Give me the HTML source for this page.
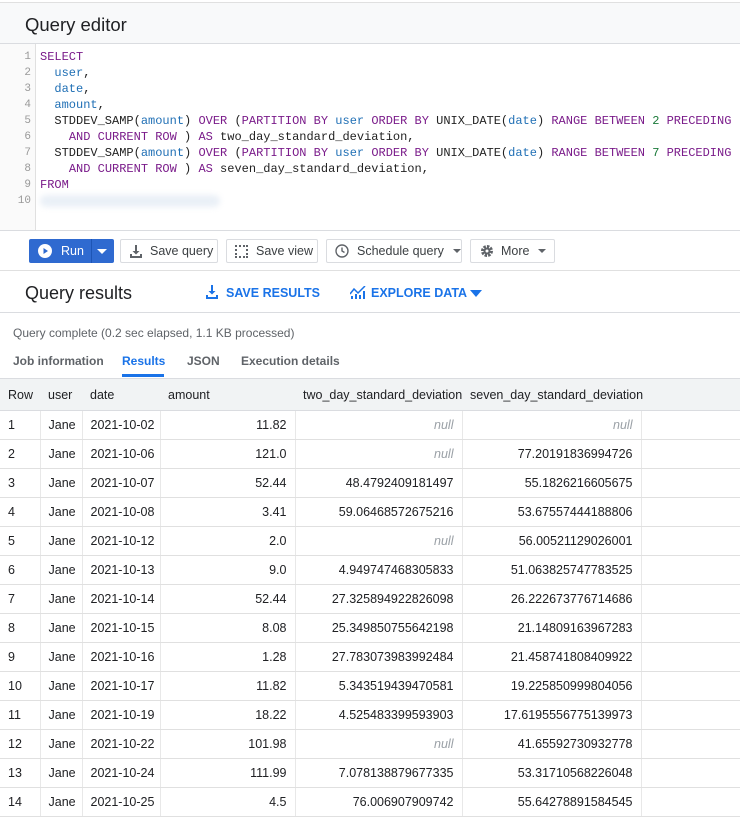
<!DOCTYPE html>
<html><head><meta charset="utf-8"><style>
*{margin:0;padding:0;box-sizing:border-box}
body{width:740px;height:820px;overflow:hidden;background:#fff;font-family:"Liberation Sans",Arial,sans-serif;color:#202124;position:relative}
.hdr{position:absolute;top:2px;left:0;width:740px;height:42px;background:#f8f9fa;border-top:1px solid #e0e0e0;border-bottom:1px solid #dadce0}
.hdr span{position:absolute;left:25px;top:11px;font-size:18.5px;color:#202124}
.gut{position:absolute;top:44px;left:0;width:36px;height:187px;border-right:1px solid #e0e0e0;background:#fafafa}
.ln{position:absolute;left:0;width:31px;text-align:right;font:11px "Liberation Mono",monospace;color:#999;line-height:16px}
.code{position:absolute;left:40px;font:12px "Liberation Mono",monospace;white-space:pre;color:#222}
.k{color:#7a1b8a}.b{color:#1f6fb5}.n{color:#1b7a3a}
.edb{position:absolute;top:230px;left:0;width:740px;border-top:1px solid #dadce0}
.btn{position:absolute;top:239px;height:24px;border:1px solid #dadce0;border-radius:2px;font-size:12.5px;color:#3c4043;display:flex;align-items:center;background:#fff;white-space:nowrap}
.run{position:absolute;top:239px;left:29px;width:85px;height:24px;background:#2f6ad0;border-radius:2px;color:#fff;font-size:12.5px}
.rh{position:absolute;top:270px;left:0;width:740px;height:43px;border-top:1px solid #e0e0e0;border-bottom:1px solid #dadce0}
.blue{color:#1a73e8;font-size:12.5px;font-weight:bold;position:absolute;top:15px}
table{position:absolute;top:380px;left:0;width:740px;table-layout:fixed;border-collapse:collapse;font-size:12.5px;white-space:nowrap}
th{height:29px;background:#f1f3f4;text-align:left;font-weight:normal;padding:0 8px;border-bottom:1px solid #dadce0;color:#202124}
td{height:29px;padding:0 8px;border-bottom:1px solid #e0e0e0;border-right:1px solid #e8e8e8}
td.r{text-align:right}
i{color:#9aa0a6}
</style></head><body>
<div class="hdr"><span>Query editor</span></div>
<div class="gut"></div>
<div class="ln" style="top:49px">1<br>2<br>3<br>4<br>5<br>6<br>7<br>8<br>9<br>10</div>
<div class="code" style="top:49px;line-height:16px"><span class="k">SELECT</span>
  <span class="b">user</span>,
  <span class="b">date</span>,
  <span class="b">amount</span>,
  STDDEV_SAMP(<span class="b">amount</span>) <span class="k">OVER</span> (<span class="k">PARTITION BY</span> <span class="b">user</span> <span class="k">ORDER BY</span> UNIX_DATE(<span class="b">date</span>) <span class="k">RANGE BETWEEN</span> <span class="n">2</span> <span class="k">PRECEDING</span>
    <span class="k">AND CURRENT ROW</span> ) <span class="k">AS</span> two_day_standard_deviation,
  STDDEV_SAMP(<span class="b">amount</span>) <span class="k">OVER</span> (<span class="k">PARTITION BY</span> <span class="b">user</span> <span class="k">ORDER BY</span> UNIX_DATE(<span class="b">date</span>) <span class="k">RANGE BETWEEN</span> <span class="n">7</span> <span class="k">PRECEDING</span>
    <span class="k">AND CURRENT ROW</span> ) <span class="k">AS</span> seven_day_standard_deviation,
<span class="k">FROM</span></div>
<div style="position:absolute;left:40px;top:195px;width:180px;height:12px;background:#eaf0f7;filter:blur(3px);border-radius:6px"></div>
<div class="edb"></div>
<div class="run"><svg style="position:absolute;left:9px;top:5px" width="14" height="14" viewBox="0 0 14 14"><circle cx="7" cy="7" r="7" fill="#fff"/><path d="M5.5 4v6l4.5-3z" fill="#2f6ad0"/></svg><span style="position:absolute;left:32px;top:5px">Run</span><div style="position:absolute;left:62px;top:0;width:1px;height:24px;background:#1d55b5"></div><svg style="position:absolute;left:68px;top:10px" width="10" height="5"><path d="M0 0h10L5 5z" fill="#fff"/></svg></div>
<div class="btn" style="left:120px;width:98px"><svg style="margin:0 8px 0 9px" width="12" height="13" viewBox="0 0 12 13"><path d="M5 0h2v6h2.5L6 9.5 2.5 6H5z M0 9h2v2h8V9h2v4H0z" fill="#5f6368"/></svg>Save query</div>
<div class="btn" style="left:226px;width:92px"><svg style="margin:0 8px 0 8px" width="13" height="13" viewBox="0 0 13 13" fill="#5f6368"><g><rect x="0" y="0" width="2" height="2"/><rect x="4" y="0" width="2" height="2"/><rect x="8" y="0" width="2" height="2"/><rect x="11" y="0" width="2" height="2"/><rect x="0" y="4" width="2" height="2"/><rect x="11" y="4" width="2" height="2"/><rect x="0" y="8" width="2" height="2"/><rect x="11" y="8" width="2" height="2"/><rect x="0" y="11" width="2" height="2"/><rect x="4" y="11" width="2" height="2"/><rect x="8" y="11" width="2" height="2"/><rect x="11" y="11" width="2" height="2"/></g></svg>Save view</div>
<div class="btn" style="left:326px;width:136px"><svg style="margin:0 8px 0 8px" width="14" height="14" viewBox="0 0 14 14"><circle cx="7" cy="7" r="6" fill="none" stroke="#5f6368" stroke-width="1.4"/><path d="M7 3.5V7l2.5 1.5" fill="none" stroke="#5f6368" stroke-width="1.4"/></svg>Schedule query<svg style="margin-left:9px" width="8" height="4"><path d="M0 0h8L4 4z" fill="#5f6368"/></svg></div>
<div class="btn" style="left:470px;width:85px"><svg style="margin:0 7px 0 9px" width="14" height="14" viewBox="0 0 14 14"><circle cx="7" cy="7" r="4.5" fill="none" stroke="#5f6368" stroke-width="3" stroke-dasharray="2.4 1.1"/><circle cx="7" cy="7" r="3.5" fill="#5f6368"/><circle cx="7" cy="7" r="1.5" fill="#fff"/></svg>More<svg style="margin-left:9px" width="8" height="4"><path d="M0 0h8L4 4z" fill="#5f6368"/></svg></div>
<div class="rh"><span style="position:absolute;left:25px;top:12px;font-size:18px">Query results</span>
<svg style="position:absolute;left:206px;top:14px" width="12" height="14" viewBox="0 0 12 14"><path d="M5 0h2v6h2.5L6 9.5 2.5 6H5z M0 10h2v2h8v-2h2v4H0z" fill="#1a73e8"/></svg><span class="blue" style="left:226px">SAVE RESULTS</span>
<svg style="position:absolute;left:350px;top:15px" width="16" height="13" viewBox="0 0 16 13"><path d="M0 8l4-5 4 4 7-7" fill="none" stroke="#1a73e8" stroke-width="1.5"/><path d="M1 13V10h2v3zM5 13V8h2v5zM9 13V9h2v4zM13 13V5h2v8z" fill="#1a73e8"/></svg><span class="blue" style="left:371px">EXPLORE DATA</span><svg style="position:absolute;left:470px;top:19px" width="12" height="7"><path d="M0 0h12L6 7z" fill="#1a73e8"/></svg></div>
<div style="position:absolute;left:13px;top:326px;font-size:12px;color:#5f6368">Query complete (0.2 sec elapsed, 1.1 KB processed)</div>
<div style="position:absolute;left:13px;top:354px;font-size:12px;color:#5f6368;font-weight:bold">Job information</div>
<div style="position:absolute;left:122px;top:354px;font-size:12px;color:#1a73e8;font-weight:bold">Results</div>
<div style="position:absolute;left:122px;top:374px;width:42px;height:3px;background:#1a73e8"></div>
<div style="position:absolute;left:187px;top:354px;font-size:12px;color:#5f6368;font-weight:bold">JSON</div>
<div style="position:absolute;left:241px;top:354px;font-size:12px;color:#5f6368;font-weight:bold">Execution details</div>
<div style="position:absolute;top:378px;left:0;width:740px;height:31px;background:#f1f3f4;border-top:1px solid #dadce0;border-bottom:1px solid #dadce0"></div>
<table>
<colgroup><col style="width:40px"><col style="width:42px"><col style="width:78px"><col style="width:135px"><col style="width:167px"><col style="width:179px"><col style="width:99px"></colgroup>
<tr><th style="height:30px">Row</th><th>user</th><th>date</th><th>amount</th><th>two_day_standard_deviation</th><th>seven_day_standard_deviation</th><th></th></tr>
<tr><td>1</td><td>Jane</td><td>2021-10-02</td><td class="r">11.82</td><td class="r"><i>null</i></td><td class="r"><i>null</i></td><td></td></tr>
<tr><td>2</td><td>Jane</td><td>2021-10-06</td><td class="r">121.0</td><td class="r"><i>null</i></td><td class="r">77.20191836994726</td><td></td></tr>
<tr><td>3</td><td>Jane</td><td>2021-10-07</td><td class="r">52.44</td><td class="r">48.4792409181497</td><td class="r">55.1826216605675</td><td></td></tr>
<tr><td>4</td><td>Jane</td><td>2021-10-08</td><td class="r">3.41</td><td class="r">59.06468572675216</td><td class="r">53.67557444188806</td><td></td></tr>
<tr><td>5</td><td>Jane</td><td>2021-10-12</td><td class="r">2.0</td><td class="r"><i>null</i></td><td class="r">56.00521129026001</td><td></td></tr>
<tr><td>6</td><td>Jane</td><td>2021-10-13</td><td class="r">9.0</td><td class="r">4.949747468305833</td><td class="r">51.063825747783525</td><td></td></tr>
<tr><td>7</td><td>Jane</td><td>2021-10-14</td><td class="r">52.44</td><td class="r">27.325894922826098</td><td class="r">26.222673776714686</td><td></td></tr>
<tr><td>8</td><td>Jane</td><td>2021-10-15</td><td class="r">8.08</td><td class="r">25.349850755642198</td><td class="r">21.14809163967283</td><td></td></tr>
<tr><td>9</td><td>Jane</td><td>2021-10-16</td><td class="r">1.28</td><td class="r">27.783073983992484</td><td class="r">21.458741808409922</td><td></td></tr>
<tr><td>10</td><td>Jane</td><td>2021-10-17</td><td class="r">11.82</td><td class="r">5.343519439470581</td><td class="r">19.225850999804056</td><td></td></tr>
<tr><td>11</td><td>Jane</td><td>2021-10-19</td><td class="r">18.22</td><td class="r">4.525483399593903</td><td class="r">17.6195556775139973</td><td></td></tr>
<tr><td>12</td><td>Jane</td><td>2021-10-22</td><td class="r">101.98</td><td class="r"><i>null</i></td><td class="r">41.65592730932778</td><td></td></tr>
<tr><td>13</td><td>Jane</td><td>2021-10-24</td><td class="r">111.99</td><td class="r">7.078138879677335</td><td class="r">53.31710568226048</td><td></td></tr>
<tr><td>14</td><td>Jane</td><td>2021-10-25</td><td class="r">4.5</td><td class="r">76.006907909742</td><td class="r">55.64278891584545</td><td></td></tr>
</table>
</body></html>
